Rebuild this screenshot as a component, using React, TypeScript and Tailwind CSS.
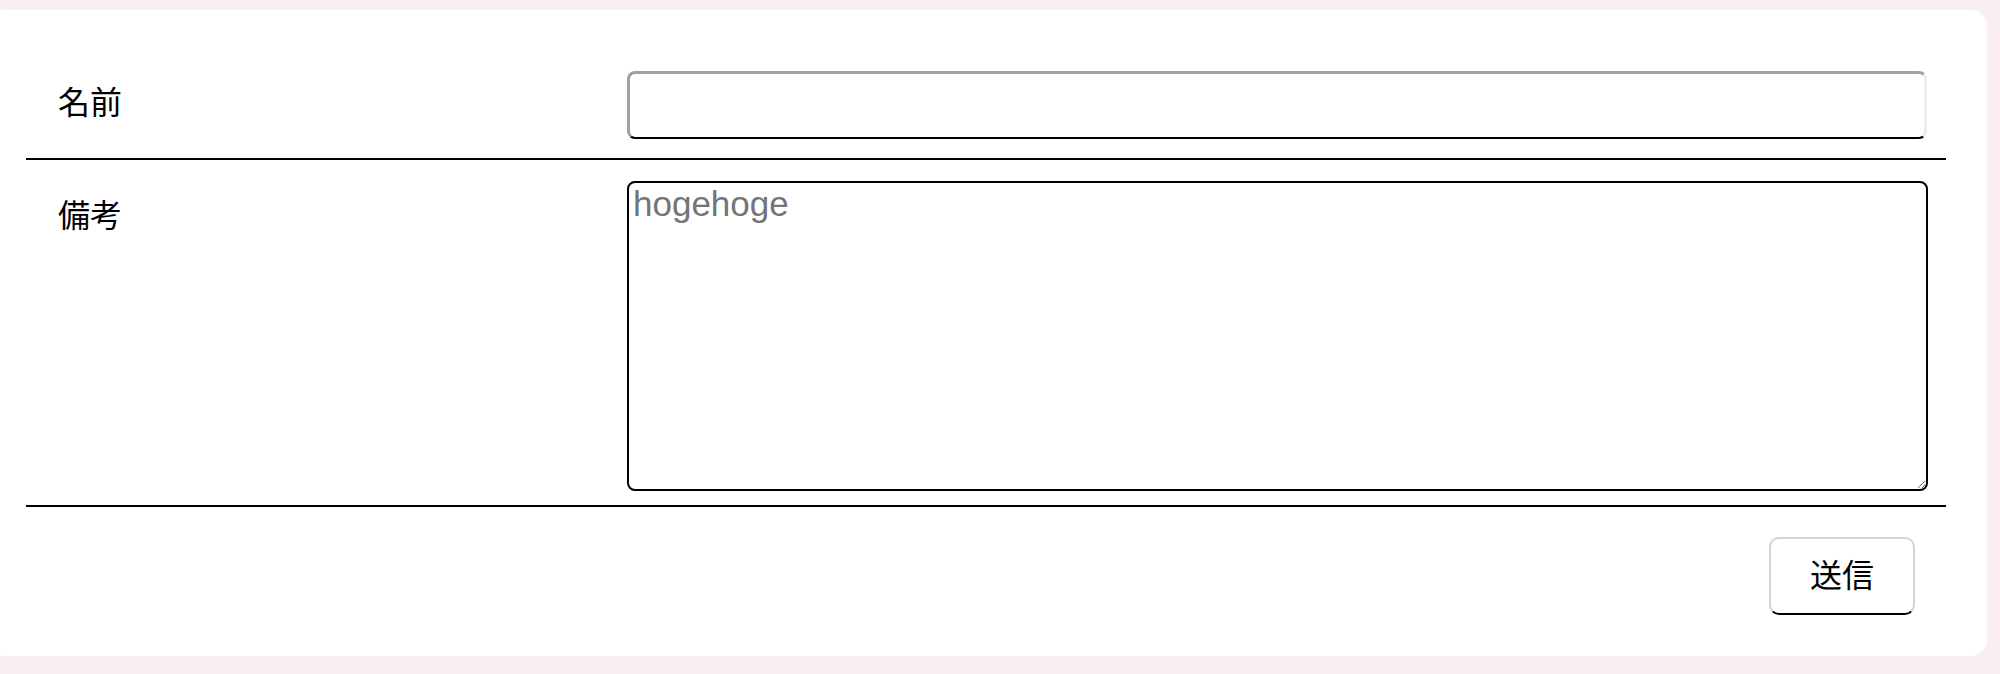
import { useState } from 'react';

const font = { fontFamily: '"Liberation Sans", "Noto Sans CJK JP", sans-serif' };

function FormRow({ label, labelClass, children }: { label: string; labelClass: string; children: React.ReactNode }) {
  return (
    <div className="flex items-start border-b-2 border-black">
      <div className={`w-[601px] shrink-0 pl-[32px] text-[32px] leading-[40px] text-black ${labelClass}`}>{label}</div>
      {children}
    </div>
  );
}

export default function App() {
  const [name, setName] = useState('');
  const [note, setNote] = useState('');

  return (
    <div className="min-h-[674px] w-[2000px] bg-[#f9eef4] pt-[10px]" style={font}>
      <div className="-ml-[12px] h-[646px] w-[1999px] rounded-[16px] bg-white pl-[38px] pr-[41px] pt-[42px]">
        <form onSubmit={(e) => e.preventDefault()}>
          <FormRow label="名前" labelClass="pt-[31px]">
            <div className="flex-1 pr-[19px]">
              <input
                type="text"
                value={name}
                onChange={(e) => setName(e.target.value)}
                className="mb-[19px] mt-[19px] block h-[68px] w-full rounded-[8px] border-[3px] border-b-2 border-[#a0a0a0] border-b-black border-r-[#ececec] bg-white px-[4px] text-[32px] outline-none"
              />
            </div>
          </FormRow>
          <FormRow label="備考" labelClass="pt-[36px]">
            <div className="flex-1 pr-[18px]">
              <textarea
                value={note}
                onChange={(e) => setNote(e.target.value)}
                placeholder="hogehoge"
                className="mb-[14px] mt-[21px] block h-[310px] w-full rounded-[8px] border-2 border-black bg-white px-[4px] pt-[1px] text-[35px] leading-[40px] outline-none placeholder:text-[#757575]"
              />
            </div>
          </FormRow>
          <div className="flex justify-end pr-[31px] pt-[30px]">
            <button
              type="submit"
              className="h-[78px] w-[146px] rounded-[10px] border-2 border-[#d4d4d4] border-b-black bg-white text-[32px] text-black"
            >
              送信
            </button>
          </div>
        </form>
      </div>
    </div>
  );
}
